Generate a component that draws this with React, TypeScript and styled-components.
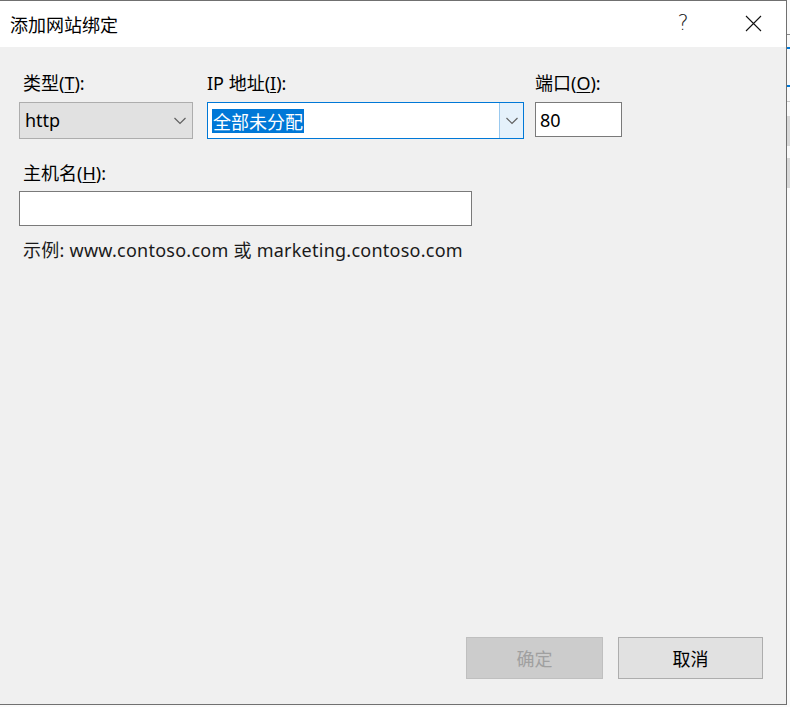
import React from "react";
import styled, { createGlobalStyle } from "styled-components";

const Global = createGlobalStyle`
  html, body { margin: 0; padding: 0; background: #fafafa; }
  body { font-family: "Noto Sans", "Noto Sans CJK SC", sans-serif; color: #000; }
`;

const Screen = styled.div`
  display: flex;
  width: 790px;
  height: 707px;
  overflow: hidden;
  background: #fafafa;
`;

const Backdrop = styled.div`
  flex: 1;
  display: flex;
  flex-direction: column;
  padding-top: 34px;
`;

const BackLine = styled.div<{ $h: number; $c: string; $mt: number }>`
  height: ${(p) => p.$h}px;
  margin-top: ${(p) => p.$mt}px;
  background: ${(p) => p.$c};
`;

const Dialog = styled.div`
  width: 786px;
  height: 703px;
  border-top: 1px solid #707070;
  border-right: 1px solid #707070;
  border-bottom: 1px solid #707070;
  display: flex;
  flex-direction: column;
  background: #f0f0f0;
  flex-shrink: 0;
`;

const TitleBar = styled.div`
  height: 46px;
  background: #fff;
  display: flex;
  align-items: center;
  padding-left: 10px;
`;

const Title = styled.div`
  flex: 1;
  font-family: "Noto Sans CJK SC", sans-serif;
  font-size: 18px;
  line-height: 24px;
  margin-top: -1px;
`;

const HelpGlyph = styled.div`
  width: 24px;
  font-family: "DejaVu Sans", sans-serif;
  font-weight: 300;
  font-size: 21px;
  color: #222;
  text-align: center;
  margin-right: 48px;
  margin-top: -2px;
`;

const CloseBox = styled.div`
  width: 20px;
  height: 20px;
  display: flex;
  align-items: center;
  justify-content: center;
  margin-right: 23px;
  margin-top: -1px;
`;

const Body = styled.div`
  flex: 1;
  display: flex;
  flex-direction: column;
  padding: 24px 23px 25px 19px;
`;

const TopRow = styled.div`
  display: flex;
  align-items: flex-start;
`;

const Field = styled.div<{ $w: number; $ml?: number }>`
  width: ${(p) => p.$w}px;
  margin-left: ${(p) => p.$ml ?? 0}px;
  display: flex;
  flex-direction: column;
`;

const Label = styled.div<{ $indent?: number }>`
  font-size: 18px;
  line-height: 24px;
  height: 24px;
  padding-left: ${(p) => p.$indent ?? 0}px;
  margin-bottom: 7px;
  white-space: nowrap;
`;

const U = styled.span`
  text-decoration: underline;
  text-underline-offset: 2px;
`;

const SelectBox = styled.div`
  height: 35px;
  border: 1px solid #adadad;
  background: #e1e1e1;
  display: flex;
  align-items: center;
  padding-left: 5px;
  padding-right: 6px;
  font-size: 18px;
`;

const SelectText = styled.div`
  flex: 1;
  margin-top: -1px;
`;

const ComboBox = styled.div`
  height: 35px;
  border: 1px solid #0078d7;
  background: #fff;
  display: flex;
  align-items: stretch;
`;

const ComboText = styled.div`
  flex: 1;
  display: flex;
  align-items: center;
  padding-left: 4px;
`;

const Selected = styled.span`
  background: #0078d7;
  color: #fff;
  font-family: "Noto Sans CJK SC", sans-serif;
  font-size: 18px;
  line-height: 24px;
  height: 24px;
  padding: 0 1px;
`;

const ComboButton = styled.div`
  width: 23px;
  background: #e5f1fb;
  border-left: 1px solid #99c9ef;
  display: flex;
  align-items: center;
  justify-content: center;
`;

const TextInput = styled.div<{ $h: number }>`
  height: ${(p) => p.$h - 2}px;
  border: 1px solid #7a7a7a;
  background: #fff;
  display: flex;
  align-items: center;
  padding-left: 4px;
  font-size: 18px;
`;

const HostSection = styled.div`
  margin-top: 22px;
  width: 453px;
  display: flex;
  flex-direction: column;
`;

const HostLabel = styled(Label)`
  margin-bottom: 6px;
`;

const Example = styled.div`
  margin-top: 12px;
  padding-left: 4px;
  font-size: 18px;
  line-height: 24px;
  letter-spacing: 0.25px;
  color: #1a1a1a;
`;

const Footer = styled.div`
  margin-top: auto;
  display: flex;
  justify-content: flex-end;
  gap: 15px;
`;

const Button = styled.div<{ $w: number; $disabled?: boolean }>`
  width: ${(p) => p.$w - 2}px;
  height: 40px;
  border: 1px solid ${(p) => (p.$disabled ? "#bfbfbf" : "#adadad")};
  background: ${(p) => (p.$disabled ? "#cccccc" : "#e1e1e1")};
  color: ${(p) => (p.$disabled ? "#a0a0a0" : "#000")};
  display: flex;
  align-items: center;
  justify-content: center;
  font-family: "Noto Sans CJK SC", sans-serif;
  font-size: 18px;
`;

const Chevron = () => (
  <svg width="12" height="8" viewBox="0 0 12 8">
    <path d="M0.5 1 L6 6.5 L11.5 1" fill="none" stroke="#606060" strokeWidth="1.2" />
  </svg>
);

const CloseIcon = () => (
  <svg width="17" height="17" viewBox="0 0 17 17">
    <path d="M1 1 L16 16 M16 1 L1 16" stroke="#111" strokeWidth="1.1" fill="none" />
  </svg>
);

export default function App() {
  return (
    <>
      <Global />
      <Screen>
        <Dialog>
          <TitleBar>
            <Title>添加网站绑定</Title>
            <HelpGlyph>?</HelpGlyph>
            <CloseBox>
              <CloseIcon />
            </CloseBox>
          </TitleBar>
          <Body>
            <TopRow>
              <Field $w={174}>
                <Label $indent={4}>
                  类型(<U>T</U>):
                </Label>
                <SelectBox>
                  <SelectText>http</SelectText>
                  <Chevron />
                </SelectBox>
              </Field>
              <Field $w={317} $ml={14}>
                <Label>
                  IP 地址(<U>I</U>):
                </Label>
                <ComboBox>
                  <ComboText>
                    <Selected>全部未分配</Selected>
                  </ComboText>
                  <ComboButton>
                    <Chevron />
                  </ComboButton>
                </ComboBox>
              </Field>
              <Field $w={87} $ml={11}>
                <Label>
                  端口(<U>O</U>):
                </Label>
                <TextInput $h={35}>80</TextInput>
              </Field>
            </TopRow>
            <HostSection>
              <HostLabel $indent={4}>
                主机名(<U>H</U>):
              </HostLabel>
              <TextInput $h={35} />
            </HostSection>
            <Example>示例: www.contoso.com 或 marketing.contoso.com</Example>
            <Footer>
              <Button $w={137} $disabled>
                确定
              </Button>
              <Button $w={145}>取消</Button>
            </Footer>
          </Body>
        </Dialog>
        <Backdrop>
          <BackLine $h={1} $c="#8a8a8a" $mt={0} />
          <BackLine $h={2} $c="#0078d7" $mt={12} />
          <BackLine $h={2} $c="#0078d7" $mt={36} />
          <BackLine $h={1} $c="#c8c8c8" $mt={14} />
          <BackLine $h={30} $c="#d9d9d9" $mt={14} />
          <BackLine $h={30} $c="#d9d9d9" $mt={12} />
        </Backdrop>
      </Screen>
    </>
  );
}
